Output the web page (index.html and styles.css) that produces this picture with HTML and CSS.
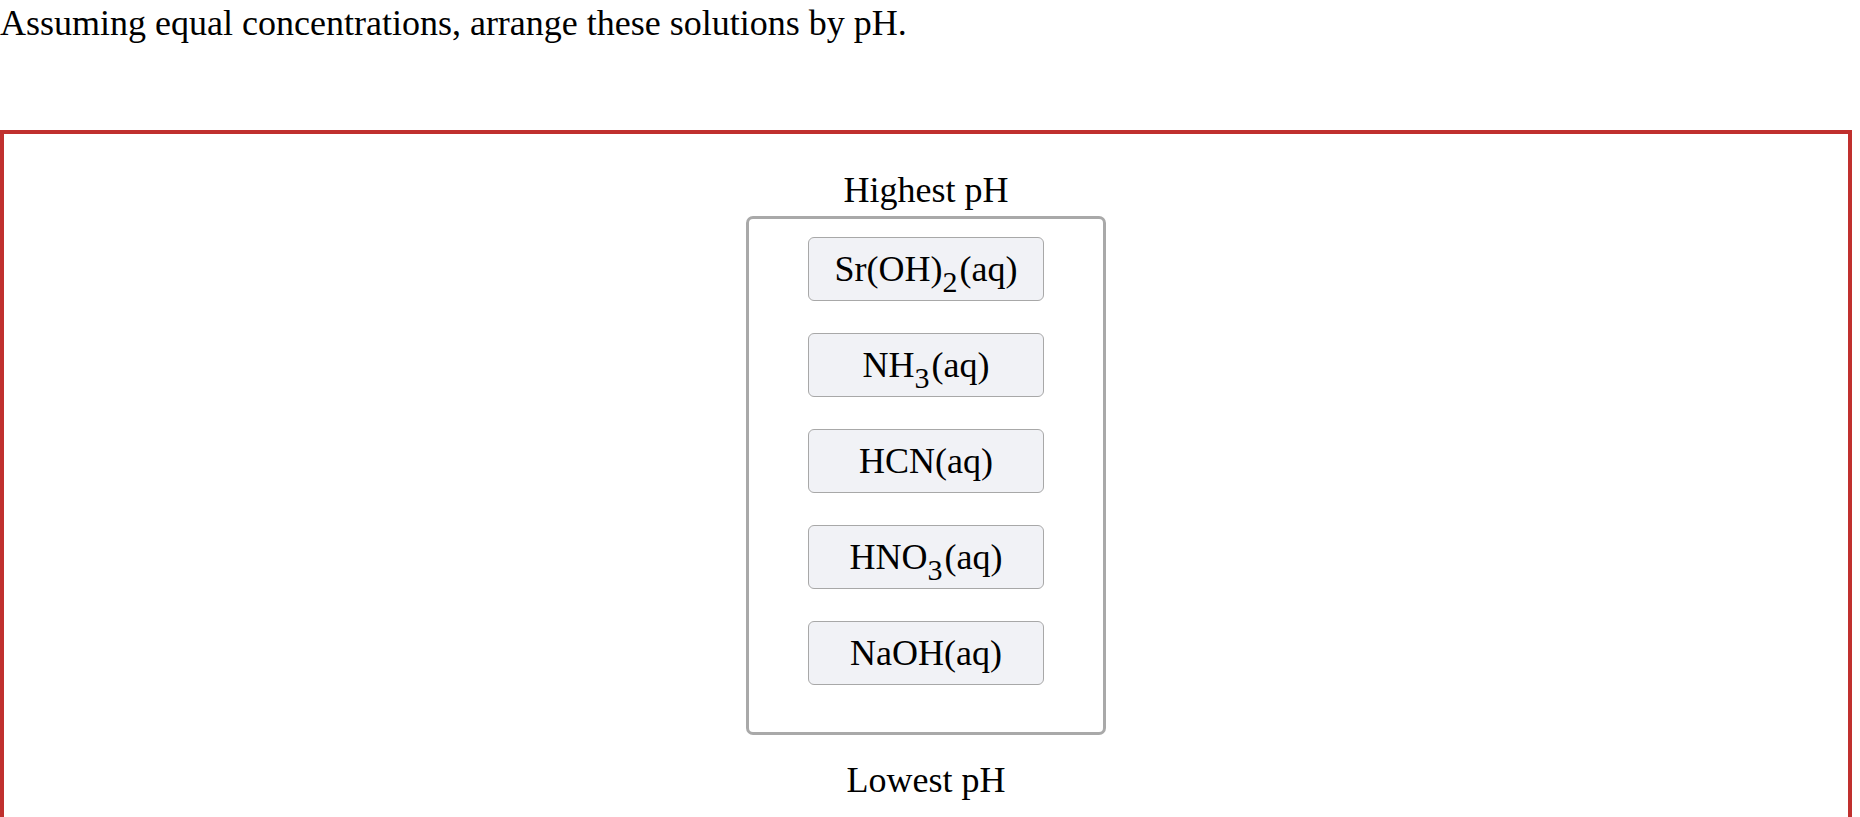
FILE: index.html
```html
<!DOCTYPE html>
<html lang="en">
<head>
    <meta charset="UTF-8">
    <title>Rank by pH</title>
    <meta name="viewport" content="width=device-width, initial-scale=1">
    <link rel="stylesheet" href="styles.css">
</head>
<body>
    <p class="prompt">Assuming equal concentrations, arrange these solutions by pH.</p>

    <div class="answer-area">
        <div class="rank-end">Highest pH</div>
        <div class="rank-list">
            <div class="rank-item"><span>Sr(OH)<sub>2</sub>(aq)</span></div>
            <div class="rank-item"><span>NH<sub>3</sub>(aq)</span></div>
            <div class="rank-item"><span>HCN(aq)</span></div>
            <div class="rank-item"><span>HNO<sub>3</sub>(aq)</span></div>
            <div class="rank-item"><span>NaOH(aq)</span></div>
        </div>
        <div class="rank-end rank-end-low">Lowest pH</div>
    </div>
</body>
</html>
```

FILE: styles.css
```css
* {
    box-sizing: border-box;
}

body {
    margin: 0;
    font-family: "Liberation Serif", "Times New Roman", serif;
    font-size: 36px;
    color: #000;
    background: #fff;
}

.prompt {
    margin: 0;
    height: 130px;
    line-height: 46px;
}

.answer-area {
    width: calc(100% - 8px);
    height: 720px;
    border: 4px solid #c0302e;
    padding-top: 36px;
    display: flex;
    flex-direction: column;
    align-items: center;
}

.rank-end {
    line-height: 40px;
    margin-bottom: 6px;
}

.rank-end-low {
    margin-top: 25px;
    margin-bottom: 0;
}

.rank-list {
    width: 360px;
    height: 519px;
    border: 3px solid #a9a9a9;
    border-radius: 7px;
    padding: 18px 0 0;
    display: flex;
    flex-direction: column;
    align-items: center;
    gap: 32px;
}

.rank-item {
    width: 236px;
    height: 64px;
    border: 1px solid #a8a8a8;
    border-radius: 6px;
    background: #f1f2f6;
    display: flex;
    align-items: center;
    justify-content: center;
    line-height: 1;
}

.rank-item sub {
    font-size: 30px;
    line-height: 0;
    vertical-align: -11px;
    margin-right: 2px;
}
```
